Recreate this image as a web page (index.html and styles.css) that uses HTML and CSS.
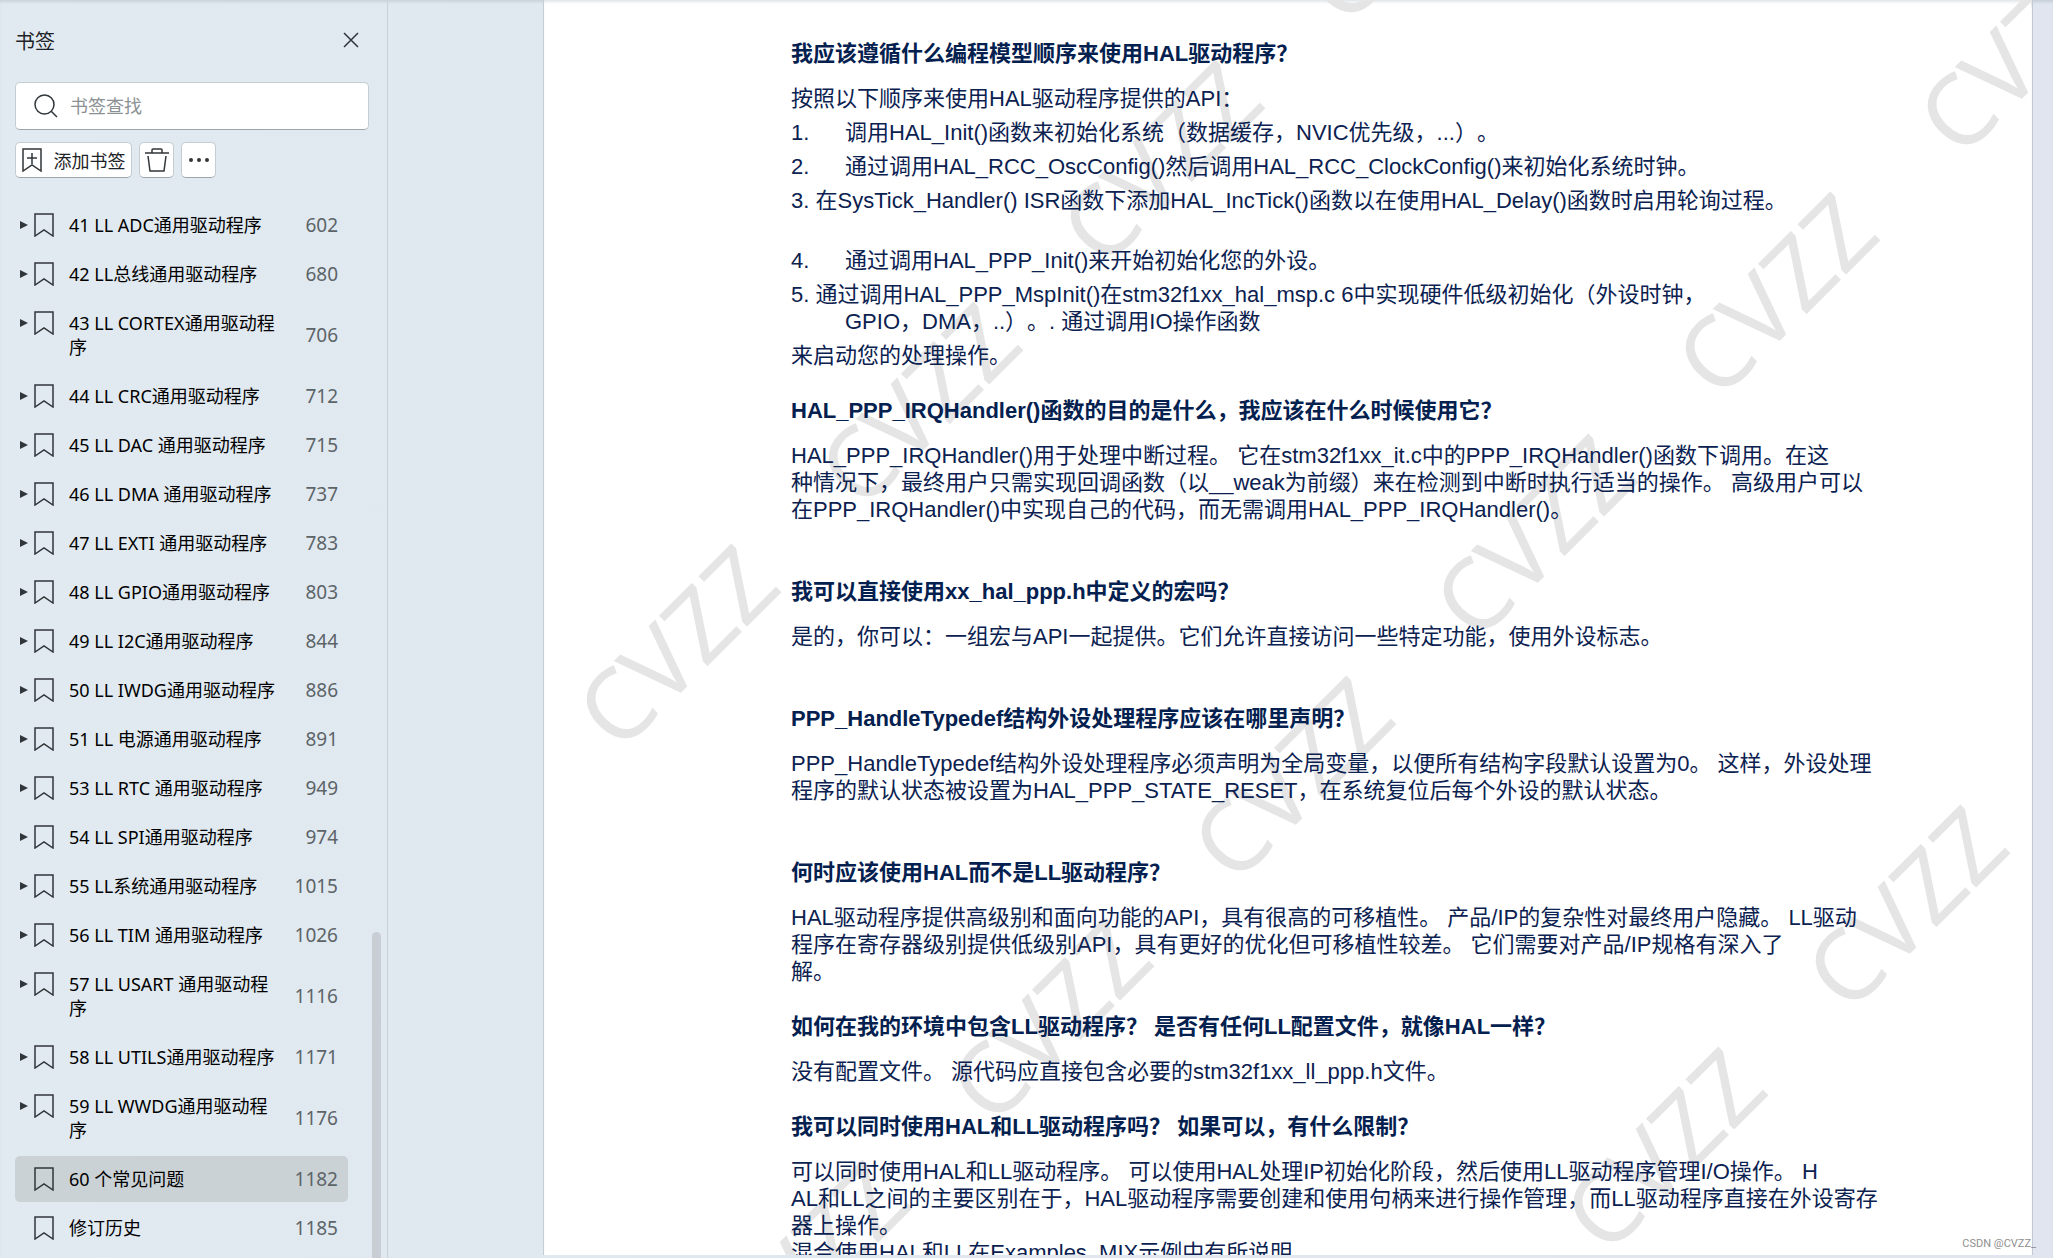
FILE: index.html
```html
<!DOCTYPE html>
<html lang="zh-CN">
  <head>
    <meta charset="UTF-8" />
    <meta name="viewport" content="width=device-width, initial-scale=1.0" />
    <title>书签</title>
    <link rel="stylesheet" href="styles.css">
  </head>
  <body>
    <svg class="sprite" aria-hidden="true">
      <symbol id="bookmark" viewBox="0 0 20 24">
        <path d="M1 1h18v22l-9-6-9 6z" fill="none" stroke="currentColor" stroke-width="1.5" />
      </symbol>
    </svg>
    <aside class="sidebar">
      <header class="sidebar-header">
        <h1>书签</h1>
        <button class="close" type="button" aria-label="关闭">
          <svg width="16" height="16" viewBox="0 0 16 16"><path d="M1 1l14 14M15 1L1 15" /></svg>
        </button>
      </header>
      <label class="search">
        <svg width="24" height="24" viewBox="0 0 24 24"><circle cx="10.500" cy="10.500" r="9.500" /><path d="M17 17l6 6" /></svg>
        <input type="text" placeholder="书签查找" aria-label="书签查找" />
      </label>
      <div class="tools">
        <button class="tool tool-add" type="button">
          <svg width="20" height="24" viewBox="0 0 20 24"><path d="M1 1h18v22l-9-6-9 6zM10 5v11M5 10h10" /></svg>
          添加书签
        </button>
        <button class="tool" type="button" aria-label="删除">
          <svg width="24" height="24" viewBox="0 0 24 24"><path d="M0 5h24M7 5V2q0-1 1-1h8q1 0 1 1v3M3 8l2 15h14l2-15" /></svg>
        </button>
        <button class="tool" type="button" aria-label="更多">
          <svg class="dots" width="20" height="4" viewBox="0 0 20 4"><circle cx="2" cy="2" r="2" /><circle cx="10" cy="2" r="2" /><circle cx="18" cy="2" r="2" /></svg>
        </button>
      </div>
      <nav class="outline"></nav>
      <div class="scrollbar"></div>
    </aside>
    <main class="viewer">
      <article class="page">
        <div class="marks" aria-hidden="true">
          <span>CVZZ</span>
          <span>CVZZ</span>
          <span>CVZZ</span>
          <span>CVZZ</span>
          <span>CVZZ</span>
          <span>CVZZ</span>
          <span>CVZZ</span>
          <span>CVZZ</span>
          <span>CVZZ</span>
          <span>CVZZ</span>
          <span>CVZZ</span>
          <span>CVZZ</span>
        </div>
        <div class="content">
          <section>
            <h2>我应该遵循什么编程模型顺序来使用HAL驱动程序？</h2>
            <p>按照以下顺序来使用HAL驱动程序提供的API：</p>
            <ol class="steps">
              <li><span class="num">1.</span>调用HAL_Init()函数来初始化系统（数据缓存，NVIC优先级，...）。</li>
              <li><span class="num">2.</span>通过调用HAL_RCC_OscConfig()然后调用HAL_RCC_ClockConfig()来初始化系统时钟。</li>
              <li class="spaced">3. 在SysTick_Handler() ISR函数下添加HAL_IncTick()函数以在使用HAL_Delay()函数时启用轮询过程。</li>
              <li><span class="num">4.</span>通过调用HAL_PPP_Init()来开始初始化您的外设。</li>
              <li>5. 通过调用HAL_PPP_MspInit()在stm32f1xx_hal_msp.c 6中实现硬件低级初始化（外设时钟，<br><span class="num"></span>GPIO，DMA，..）。. 通过调用IO操作函数</li>
            </ol>
            <p>来启动您的处理操作。</p>
          </section>
          <section class="wide">
            <h2>HAL_PPP_IRQHandler()函数的目的是什么，我应该在什么时候使用它？</h2>
            <p>HAL_PPP_IRQHandler()用于处理中断过程。 它在stm32f1xx_it.c中的PPP_IRQHandler()函数下调用。在这<br>种情况下，最终用户只需实现回调函数（以__weak为前缀）来在检测到中断时执行适当的操作。 高级用户可以<br>在PPP_IRQHandler()中实现自己的代码，而无需调用HAL_PPP_IRQHandler()。</p>
          </section>
          <section class="wide">
            <h2>我可以直接使用xx_hal_ppp.h中定义的宏吗？</h2>
            <p>是的，你可以：一组宏与API一起提供。它们允许直接访问一些特定功能，使用外设标志。</p>
          </section>
          <section class="wide">
            <h2>PPP_HandleTypedef结构外设处理程序应该在哪里声明？</h2>
            <p>PPP_HandleTypedef结构外设处理程序必须声明为全局变量，以便所有结构字段默认设置为0。 这样，外设处理<br>程序的默认状态被设置为HAL_PPP_STATE_RESET，在系统复位后每个外设的默认状态。</p>
          </section>
          <section>
            <h2>何时应该使用HAL而不是LL驱动程序？</h2>
            <p>HAL驱动程序提供高级别和面向功能的API，具有很高的可移植性。 产品/IP的复杂性对最终用户隐藏。 LL驱动<br>程序在寄存器级别提供低级别API，具有更好的优化但可移植性较差。 它们需要对产品/IP规格有深入了<br>解。</p>
          </section>
          <section>
            <h2>如何在我的环境中包含LL驱动程序？ 是否有任何LL配置文件，就像HAL一样？</h2>
            <p>没有配置文件。 源代码应直接包含必要的stm32f1xx_ll_ppp.h文件。</p>
          </section>
          <section>
            <h2>我可以同时使用HAL和LL驱动程序吗？ 如果可以，有什么限制？</h2>
            <p>可以同时使用HAL和LL驱动程序。 可以使用HAL处理IP初始化阶段，然后使用LL驱动程序管理I/O操作。 H<br>AL和LL之间的主要区别在于，HAL驱动程序需要创建和使用句柄来进行操作管理，而LL驱动程序直接在外设寄存<br>器上操作。<br>混合使用HAL和LL在Examples_MIX示例中有所说明.</p>
          </section>
        </div>
      </article>
      <small class="credit">CSDN @CVZZ_</small>
    </main>
    <script>
      const items = [
        ["41 LL ADC通用驱动程序", 602],
        ["42 LL总线通用驱动程序", 680],
        ["43 LL CORTEX通用驱动程序", 706],
        ["44 LL CRC通用驱动程序", 712],
        ["45 LL DAC 通用驱动程序", 715],
        ["46 LL DMA 通用驱动程序", 737],
        ["47 LL EXTI 通用驱动程序", 783],
        ["48 LL GPIO通用驱动程序", 803],
        ["49 LL I2C通用驱动程序", 844],
        ["50 LL IWDG通用驱动程序", 886],
        ["51 LL 电源通用驱动程序", 891],
        ["53 LL RTC 通用驱动程序", 949],
        ["54 LL SPI通用驱动程序", 974],
        ["55 LL系统通用驱动程序", 1015],
        ["56 LL TIM 通用驱动程序", 1026],
        ["57 LL USART 通用驱动程序", 1116],
        ["58 LL UTILS通用驱动程序", 1171],
        ["59 LL WWDG通用驱动程序", 1176],
        ["60 个常见问题", 1182, "leaf active"],
        ["修订历史", 1185, "leaf"],
      ];

      document.querySelector(".outline").innerHTML = items
        .map(
          ([title, page, state = ""]) => `
        <a class="item ${state}" href="#p${page}">
          <svg class="arrow" width="8" height="8" viewBox="0 0 8 8"><path d="M0 0l8 4-8 4z" /></svg>
          <svg class="flag" width="20" height="24"><use href="#bookmark" /></svg>
          <span class="title">${title}</span>
          <span class="number">${page}</span>
        </a>`
        )
        .join("");
    </script>
  </body>
</html>
```
FILE: styles.css
```css
html {
  box-sizing: border-box;
  font-family: "Noto Sans", "Noto Sans CJK SC", sans-serif;
  font-size: 18px;
}

*,
*:before,
*:after {
  box-sizing: inherit;
}

body {
  margin: 0;
  height: 100vh;
  display: flex;
  overflow: hidden;
  background: linear-gradient(to right, #e1eaf0, #e0e5ef);
  box-shadow: inset 0 3px 3px -1px rgba(60, 80, 100, 0.15);
}

button,
input {
  font: inherit;
  color: inherit;
}

svg {
  flex: none;
  fill: none;
  stroke: #30363a;
  stroke-width: 1.5;
}

.sprite {
  position: absolute;
  width: 0;
  height: 0;
}

/* sidebar */

.sidebar {
  position: relative;
  flex: none;
  width: 388px;
  padding: 24px 18px 0 15px;
  border-right: 1px solid #c9d2d6;
  overflow: hidden;
}

.sidebar-header {
  display: flex;
  justify-content: space-between;
  align-items: center;
  height: 32px;
  margin-bottom: 26px;
}

.sidebar-header h1 {
  margin: 0;
  font-size: 20px;
  font-weight: 400;
  color: #1d2327;
}

.close {
  display: flex;
  padding: 10px;
  border: 0;
  background: none;
}

.search {
  display: flex;
  align-items: center;
  gap: 10px;
  height: 48px;
  padding: 0 18px;
  border: 1px solid #c3cdd2;
  border-bottom-color: #9ba5aa;
  border-radius: 5px;
  background: #fff;
}

.search input {
  flex: 1;
  min-width: 0;
  border: 0;
  outline: 0;
  background: none;
}

.search input::placeholder {
  color: #8c9194;
}

.tools {
  display: flex;
  gap: 7px;
  margin: 12px 0 24px;
}

.tool {
  display: flex;
  justify-content: center;
  align-items: center;
  gap: 12px;
  width: 35px;
  height: 36px;
  padding: 0;
  border: 1px solid #c3cdd2;
  border-bottom-color: #9ba5aa;
  border-radius: 5px;
  background: #fff;
  color: #1d2327;
}

.tool-add {
  width: 117px;
}

.dots {
  fill: #30363a;
  stroke: none;
}

.item {
  display: flex;
  align-items: flex-start;
  width: 333px;
  margin-bottom: 3px;
  padding: 11px 10px 11px 5px;
  border-radius: 5px;
  line-height: 24px;
  color: #000;
  text-decoration: none;
}

.active {
  background: #cbd2d6;
}

.arrow {
  margin: 8px 6px 8px 0;
  fill: #30363a;
  stroke: none;
}

.leaf .arrow {
  visibility: hidden;
}

.flag {
  margin-right: 15px;
  color: #30363a;
}

.title {
  width: 214px;
}

.number {
  align-self: center;
  margin-left: auto;
  font-size: 19px;
  color: #5c6468;
}

.scrollbar {
  position: absolute;
  right: 6px;
  top: 932px;
  bottom: 0;
  width: 9px;
  border-radius: 5px 5px 0 0;
  background: #c9ced4;
}

/* document */

.viewer {
  position: relative;
  flex: 1;
  display: flex;
  min-width: 0;
  padding: 0 20px 3px 155px;
}

.page {
  position: relative;
  flex: 1;
  min-width: 0;
  padding: 40px 0 0 247px;
  border-right: 1px solid #c3c9d2;
  border-left: 1px solid #c3cdd2;
  background: #fff;
  overflow: hidden;
  box-shadow: inset 0 3px 3px -1px rgba(60, 80, 100, 0.15);
}

.content {
  position: relative;
  font-family: "Liberation Sans", "Noto Sans CJK SC", sans-serif;
  font-size: 22px;
  line-height: 27px;
  white-space: nowrap;
  text-spacing-trim: space-all;
  color: #0b2150;
}

.content section {
  margin-bottom: 28px;
}

.content .wide {
  margin-bottom: 55px;
}

.content h2 {
  margin: 0 0 18px;
  font-size: inherit;
  color: #03204f;
}

.content p {
  margin: 0;
}

.steps {
  margin: 7px 0;
  padding: 0;
  list-style: none;
}

.steps li {
  margin-bottom: 7px;
}

.steps .spaced {
  margin-bottom: 33px;
}

.num {
  display: inline-block;
  width: 54px;
}

/* watermark tiles, 242px apart along the diagonal */

.marks span {
  position: absolute;
  font-size: 98px;
  line-height: 1;
  color: #e5e5e5;
  transform: translate(-50%, -50%) rotate(-45deg);
}

.marks span:nth-child(1) { left: 131px; top: 645px; }
.marks span:nth-child(2) { left: 373px; top: 403px; }
.marks span:nth-child(3) { left: 615px; top: 161px; }
.marks span:nth-child(4) { left: 857px; top: -81px; }
.marks span:nth-child(5) { left: 262px; top: 1261px; }
.marks span:nth-child(6) { left: 504px; top: 1019px; }
.marks span:nth-child(7) { left: 746px; top: 777px; }
.marks span:nth-child(8) { left: 988px; top: 535px; }
.marks span:nth-child(9) { left: 1230px; top: 293px; }
.marks span:nth-child(10) { left: 1472px; top: 51px; }
.marks span:nth-child(11) { left: 1118px; top: 1148px; }
.marks span:nth-child(12) { left: 1360px; top: 906px; }

.credit {
  position: absolute;
  right: 17px;
  bottom: 6px;
  font-family: Roboto, "Liberation Sans", sans-serif;
  font-size: 11px;
  line-height: 16px;
  color: #8f8f8f;
}
```
